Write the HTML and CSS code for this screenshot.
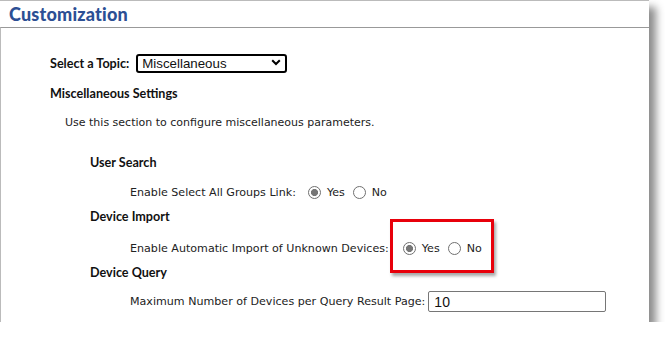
FILE: index.html
```html
<!DOCTYPE html>
<html lang="en">
  <head>
    <meta charset="UTF-8" />
    <title>Customization</title>
    <link rel="stylesheet" href="styles.css">
  </head>
  <body>
    <div class="panel">
      <div class="panel_head">
        <h1>Customization</h1>
      </div>
      <div class="panel_body">
        <div class="topic_row">
          <label class="bold">Select a Topic:</label>
          <span class="select_wrap">
            <select class="topic">
              <option>Miscellaneous</option>
            </select>
            <svg class="chev" width="10" height="7" viewBox="0 0 10 7">
              <path d="M1.2 1.2 L5 5 L8.8 1.2" fill="none" stroke="#000" stroke-width="2"/>
            </svg>
          </span>
        </div>
        <div class="bold settings_title">Miscellaneous Settings</div>
        <div class="intro">Use this section to configure miscellaneous parameters.</div>

        <div class="bold group first">User Search</div>
        <div class="field">
          <span class="label">Enable Select All Groups Link:</span>
          <span class="radios">
            <input type="radio" name="groups" checked><span class="opt">Yes</span>
            <input type="radio" name="groups"><span class="opt">No</span>
          </span>
        </div>

        <div class="bold group">Device Import</div>
        <div class="field import">
          <span class="label">Enable Automatic Import of Unknown Devices:</span>
          <span class="radios marked">
            <input type="radio" name="import" checked><span class="opt">Yes</span>
            <input type="radio" name="import"><span class="opt">No</span>
          </span>
        </div>

        <div class="bold group">Device Query</div>
        <div class="field query">
          <span class="label">Maximum Number of Devices per Query Result Page:</span>
          <input class="count" type="text" value="10">
        </div>
      </div>
    </div>
  </body>
</html>
```
FILE: styles.css
```css
body {
  margin: 0;
  background: #fff;
  font-family: "DejaVu Sans", Tahoma, sans-serif;
  color: #222;
}

.panel {
  width: 649px;
  height: 322px;
  background: #fff;
  border-top: 1px solid #bbb;
  box-sizing: border-box;
  box-shadow: 7px 7px 8px rgba(0, 0, 0, 0.45);
}

.panel_head {
  height: 26px;
  padding-left: 9px;
}

.panel_head h1 {
  margin: 0;
  font-family: Lato, "Open Sans", sans-serif;
  font-weight: 900;
  font-size: 18px;
  line-height: 26px;
  color: #2c4f94;
  letter-spacing: 0.2px;
}

.panel_body {
  height: 295px;
  border-top: 1px solid #999;
  border-left: 1px solid #bbb;
  box-sizing: border-box;
}

.bold {
  font-family: Lato, "Open Sans", sans-serif;
  font-weight: 700;
  font-size: 12.6px;
  color: #111;
}

.topic_row {
  display: flex;
  align-items: center;
  height: 18px;
  margin-top: 26px;
  padding-left: 49px;
}

.topic_row label {
  margin-right: 7px;
}

.select_wrap {
  position: relative;
  display: inline-block;
}

.topic {
  appearance: none;
  width: 151px;
  height: 19px;
  border: 2px solid #000;
  border-radius: 3px;
  padding: 0 0 0 4px;
  font-family: "Liberation Sans", Arial, sans-serif;
  font-size: 13.3px;
  color: #111;
  background: #fff;
}

.chev {
  position: absolute;
  right: 6px;
  top: 6px;
}

.settings_title {
  margin-top: 14px;
  padding-left: 49px;
  line-height: 16px;
}

.intro {
  margin-top: 13px;
  padding-left: 64px;
  font-size: 11px;
  line-height: 16px;
}

.group {
  padding-left: 89px;
  line-height: 16px;
  margin-top: 8px;
}

.group.first {
  margin-top: 24px;
}

.field {
  display: flex;
  align-items: center;
  height: 18px;
  margin-top: 12px;
  padding-left: 129px;
  font-size: 11.1px;
}

.field.import {
  margin-top: 14px;
}

.field.query {
  margin-top: 10px;
  height: 21px;
}

.label {
  margin-right: 9px;
}

.radios {
  display: inline-flex;
  align-items: center;
  position: relative;
}

.radios input {
  appearance: none;
  width: 13px;
  height: 13px;
  margin: 0 6px 0 3px;
  border: 1px solid #707070;
  border-radius: 50%;
  background: #fff;
}

.radios input:checked {
  background: radial-gradient(circle, #777 0 3.3px, #fff 3.8px);
}

.opt {
  margin-right: 5px;
}

.marked::before {
  content: "";
  position: absolute;
  left: -10px;
  right: -7px;
  top: -23px;
  bottom: -18px;
  border: 3px solid #e8000b;
  box-shadow: 2px 3px 3px rgba(0, 0, 0, 0.35);
}

.field.import .label {
  margin-right: 11px;
}

.count {
  width: 178px;
  height: 21px;
  box-sizing: border-box;
  margin-left: -6px;
  border: 1px solid #767676;
  border-radius: 2px;
  padding: 0 5px;
  font-family: "Liberation Sans", Arial, sans-serif;
  font-size: 14px;
  color: #111;
}
```
